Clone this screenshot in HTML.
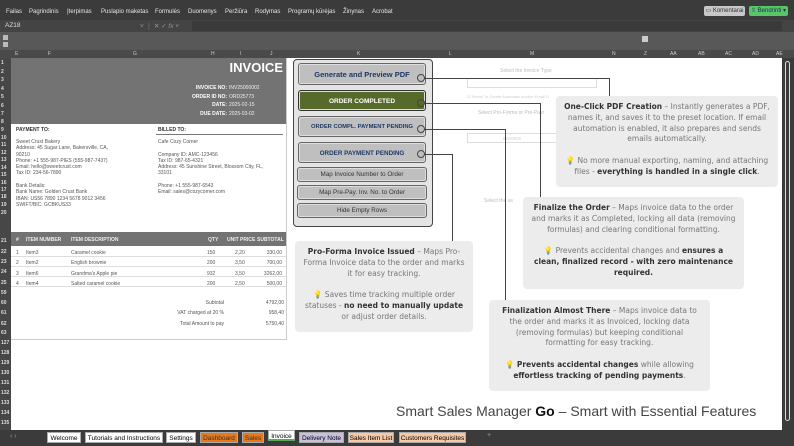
<!DOCTYPE html>
<html><head><meta charset="utf-8"><style>
*{margin:0;padding:0;box-sizing:border-box}
body{width:794px;height:446px;overflow:hidden;background:#fff;font-family:"Liberation Sans",sans-serif;position:relative}
.a{position:absolute}
.menu{left:0;top:0;width:794px;height:20px;background:#3b3b3b;color:#e6e6e6;font-size:6px}
.menu span{position:absolute;top:9px}
.fb{left:0;top:20px;width:794px;height:12px;background:#444;color:#ddd;font-size:6.5px}
.ol{left:0;top:32px;width:794px;height:18px;background:#585858}
.ch{left:0;top:50px;width:794px;height:8px;background:#4a4a4a;color:#ccc;font-size:5px}
.ch span{position:absolute;top:1px}
.rh{left:0;top:58px;width:11px;height:372px;background:#474747;color:#ddd;font-size:5px;font-weight:bold}
.rh span{position:absolute;left:1px}
.inv{left:11px;top:58px;width:275px;height:66px;background:#737373}
.t{font-size:5px;color:#555;line-height:6.3px}
.tab{top:432px;height:11px;font-size:6.5px;line-height:11px;text-align:center;border:1px solid #aaa}
.btn{left:298px;width:128px;border:1px solid #666;border-radius:3px;background:#bfbfbf;color:#1f3864;font-weight:bold;text-align:center;box-shadow:inset 0 0 0 1px #ddd}
.c{border-radius:4px;background:#ececec;color:#777;font-family:"DejaVu Sans",sans-serif;font-size:7.5px;line-height:10.8px;text-align:center;padding:6px 7px}
.c b{color:#333}
.ln{background:#444}
.cir{width:8px;height:8px;border:1.5px solid #444;border-radius:50%;background:#bfbfbf}
</style></head><body>
<div class="a menu">
<span style="left:6px">Failas</span><span style="left:29px">Pagrindinis</span><span style="left:67px">Įterpimas</span><span style="left:101px">Puslapio maketas</span><span style="left:155px">Formulės</span><span style="left:188px">Duomenys</span><span style="left:225px">Peržiūra</span><span style="left:255px">Rodymas</span><span style="left:288px">Programų kūrėjas</span><span style="left:343px">Žinynas</span><span style="left:372px">Acrobat</span>
<div class="a" style="left:704px;top:6px;width:41px;height:10px;background:#c8c8c8;color:#333;font-size:6px;line-height:10px;text-align:center;border-radius:2px">▭ Komentarai</div>
<div class="a" style="left:749px;top:6px;width:39px;height:10px;background:#5ac46a;color:#134;font-size:6px;line-height:10px;text-align:center;border-radius:2px">⇧ Bendrinti ▾</div>
</div>
<div class="a fb"><span class="a" style="left:5px;top:2px">AZ18</span><span class="a" style="left:140px;top:2px;color:#999">˅ ⋮ ✕ ✓ <i>fx</i> ˅</span><div class="a" style="left:192px;top:1px;width:590px;height:10px;background:#3a3a3a"></div></div>
<div class="a ol"><div class="a" style="left:3px;top:3px;width:5px;height:5px;background:#bbb"></div><div class="a" style="left:3px;top:10px;width:5px;height:5px;background:#bbb"></div><div class="a" style="left:642px;top:4px;width:6px;height:6px;background:#ccc"></div></div>
<div class="a ch"><span style="left:15px">E</span><span style="left:48px">F</span><span style="left:133px">G</span><span style="left:211px">H</span><span style="left:240px">I</span><span style="left:270px">J</span><span style="left:357px">K</span><span style="left:449px">L</span><span style="left:530px">M</span><span style="left:612px">N</span><span style="left:644px">Z</span><span style="left:670px">AA</span><span style="left:698px">AB</span><span style="left:725px">AC</span><span style="left:752px">AD</span><span style="left:776px">AE</span></div>
<div class="a rh">
<span style="top:2px">1</span><span style="top:11px">2</span><span style="top:19px">3</span><span style="top:28px">4</span><span style="top:36px">5</span><span style="top:45px">6</span><span style="top:53px">7</span><span style="top:61px">8</span><span style="top:69px">9</span><span style="top:77px">10</span><span style="top:84px">11</span><span style="top:92px">12</span><span style="top:99px">13</span><span style="top:107px">14</span><span style="top:114px">15</span><span style="top:122px">16</span><span style="top:129px">17</span><span style="top:136px">18</span><span style="top:144px">19</span><span style="top:152px">20</span><span style="top:180px">21</span><span style="top:191px">22</span><span style="top:201px">23</span><span style="top:211px">24</span><span style="top:222px">25</span><span style="top:232px">59</span><span style="top:242px">60</span><span style="top:252px">61</span><span style="top:263px">62</span><span style="top:272px">63</span><span style="top:282px">127</span><span style="top:292px">128</span><span style="top:302px">129</span><span style="top:312px">130</span><span style="top:322px">131</span><span style="top:332px">132</span><span style="top:342px">133</span><span style="top:352px">134</span><span style="top:362px">135</span>
</div>
<div class="a inv">
<div class="a" style="right:3px;top:2px;color:#fff;font-size:13px;font-weight:bold">INVOICE</div>
<div class="a" style="left:170px;top:26px;color:#fff;font-size:5px;line-height:8.5px;text-align:right;width:46px;font-weight:bold">INVOICE NO:<br>ORDER ID NO:<br>DATE:<br>DUE DATE:</div>
<div class="a" style="left:218px;top:26px;color:#eee;font-size:5px;line-height:8.5px">INV25000002<br>ORD25773<br>2025-02-15<br>2025-03-02</div>
</div>
<div class="a t" style="left:16px;top:127px;font-weight:bold;color:#333">PAYMENT TO:</div>
<div class="a t" style="left:158px;top:127px;font-weight:bold;color:#333">BILLED TO:</div>
<div class="a" style="left:156px;top:134px;width:127px;height:1px;background:#777"></div>
<div class="a t" style="left:16px;top:139px">Sweet Crust Bakery<br>Address: 45 Sugar Lane, Bakersville, CA,<br>90210<br>Phone: +1 555-987-PIES (555-987-7437)<br>Email: hello@sweetcrust.com<br>Tax ID: 234-56-7890<br><br>Bank Details:<br>Bank Name: Golden Crust Bank<br>IBAN: US56 7890 1234 5678 9012 3456<br>SWIFT/BIC: GCBKUS33</div>
<div class="a t" style="left:158px;top:139px">Cafe Cozy Corner<br><br>Company ID: AMC-123456<br>Tax ID: 987-65-4321<br>Address: 45 Sunshine Street, Blossom City, FL,<br>33101<br><br>Phone: +1 555-987-6543<br>Email: sales@cozycorner.com</div>
<div class="a" style="left:11px;top:232px;width:275px;height:14px;background:#737373;color:#eee;font-size:5px;font-weight:bold">
<span class="a" style="left:5px;top:5px">#</span><span class="a" style="left:15px;top:5px">ITEM NUMBER</span><span class="a" style="left:60px;top:5px">ITEM DESCRIPTION</span><span class="a" style="left:197px;top:5px">QTY</span><span class="a" style="left:216px;top:5px">UNIT PRICE</span><span class="a" style="left:246px;top:5px">SUBTOTAL</span></div>
<div class="a t" style="left:16px;top:248px;line-height:10.4px">1<br>2<br>3<br>4</div>
<div class="a t" style="left:26px;top:248px;line-height:10.4px">Item3<br>Item2<br>Item6<br>Item4</div>
<div class="a t" style="left:71px;top:248px;line-height:10.4px">Caramel cookie<br>English brownie<br>Grandma's Apple pie<br>Salted caramel cookie</div>
<div class="a t" style="left:207px;top:248px;line-height:10.4px">150<br>200<br>932<br>200</div>
<div class="a t" style="left:235px;top:248px;line-height:10.4px">2,20<br>3,50<br>3,50<br>2,50</div>
<div class="a t" style="left:257px;top:248px;line-height:10.4px;text-align:right;width:25px">330,00<br>700,00<br>3262,00<br>500,00</div>
<div class="a" style="left:11px;top:256px;width:275px;border-top:1px solid #ddd;height:31px;border-bottom:1px solid #ddd"></div>
<div class="a" style="left:11px;top:266px;width:275px;border-top:1px solid #ddd;height:11px;border-bottom:1px solid #ddd"></div>
<div class="a t" style="left:150px;top:298px;line-height:10.4px;text-align:right;width:74px">Subtotal<br>VAT charged at 20 %<br>Total Amount to pay</div>
<div class="a t" style="left:250px;top:298px;line-height:10.4px;text-align:right;width:34px">4792,00<br>958,40<br>5750,40</div>
<div class="a" style="left:11px;top:339px;width:275px;height:1px;background:#ccc"></div>
<div class="a" style="left:286px;top:58px;width:1px;height:282px;background:#ccc"></div>
<div class="a" style="left:500px;top:68px;font-size:5px;color:#bbb">Select the Invoice Type</div>
<div class="a" style="left:467px;top:78px;width:130px;height:10px;border:1px solid #ddd"></div>
<div class="a" style="left:467px;top:94px;font-size:4px;color:#ccc">☑ Select To Create Automatic Invoice Email D</div>
<div class="a" style="left:478px;top:110px;font-size:5px;color:#bbb">Select Pro-Forma or Pre-Payr</div>
<div class="a" style="left:467px;top:133px;width:90px;height:10px;border:1px solid #ddd;font-size:4.5px;color:#ccc;text-align:center;line-height:9px">INVOICE</div>
<div class="a" style="left:484px;top:198px;font-size:5px;color:#bbb">Select the us</div>
<div class="a" style="left:293px;top:59px;width:140px;height:168px;border:1.5px solid #444;border-radius:4px;background:#e4e4e4"></div>
<div class="a btn" style="top:63px;height:22px;line-height:22px;font-size:7.5px">Generate and Preview PDF</div>
<div class="a btn" style="top:90px;height:21px;line-height:21px;font-size:6.5px;background:#566b2a;color:#fff;border-color:#333">ORDER COMPLETED</div>
<div class="a btn" style="top:116px;height:21px;line-height:21px;font-size:5.8px">ORDER COMPL. PAYMENT PENDING</div>
<div class="a btn" style="top:142px;height:21px;line-height:21px;font-size:6.3px">ORDER PAYMENT PENDING</div>
<div class="a btn" style="left:297px;width:130px;top:167px;height:15px;line-height:14px;font-size:6.3px;color:#333;font-weight:normal">Map Invoice Number to Order</div>
<div class="a btn" style="left:297px;width:130px;top:185px;height:15px;line-height:14px;font-size:6.3px;color:#333;font-weight:normal">Map Pre-Pay. Inv. No. to Order</div>
<div class="a btn" style="left:297px;width:130px;top:203px;height:15px;line-height:14px;font-size:6.3px;color:#333;font-weight:normal">Hide Empty Rows</div>
<div class="a ln" style="left:424px;top:78px;width:186px;height:1px"></div><div class="a ln" style="left:609px;top:78px;width:1px;height:18px"></div>
<div class="a ln" style="left:424px;top:103px;width:117px;height:1px"></div><div class="a ln" style="left:540px;top:103px;width:1px;height:94px"></div>
<div class="a ln" style="left:424px;top:129px;width:82px;height:1px"></div><div class="a ln" style="left:505px;top:129px;width:1px;height:171px"></div>
<div class="a ln" style="left:424px;top:154px;width:29px;height:1px"></div><div class="a ln" style="left:452px;top:154px;width:1px;height:87px"></div>
<div class="a cir" style="left:417px;top:74px"></div><div class="a cir" style="left:417px;top:99px;background:#566b2a"></div><div class="a cir" style="left:417px;top:125px"></div><div class="a cir" style="left:417px;top:150px"></div>
<div class="a c" style="left:556px;top:96px;width:222px;height:91px">
<b>One-Click PDF Creation</b> – Instantly generates a PDF, names it, and saves it to the preset location. If email automation is enabled, it also prepares and sends emails automatically.<br><br><span style="color:#e8a800">💡</span> No more manual exporting, naming, and attaching files - <b>everything is handled in a single click</b>.</div>
<div class="a c" style="left:523px;top:197px;width:221px;height:92px">
<b>Finalize the Order</b> – Maps invoice data to the order and marks it as Completed, locking all data (removing formulas) and clearing conditional formatting.<br><br><span style="color:#e8a800">💡</span> Prevents accidental changes and <b>ensures a clean, finalized record - with zero maintenance required.</b></div>
<div class="a c" style="left:295px;top:241px;width:178px;height:91px">
<b>Pro-Forma Invoice Issued</b> – Maps Pro-Forma Invoice data to the order and marks it for easy tracking.<br><br><span style="color:#e8a800">💡</span> Saves time tracking multiple order statuses - <b>no need to manually update</b> or adjust order details.</div>
<div class="a c" style="left:489px;top:300px;width:221px;height:91px">
<b>Finalization Almost There</b> – Maps invoice data to the order and marks it as Invoiced, locking data (removing formulas) but keeping conditional formatting for easy tracking.<br><br><span style="color:#e8a800">💡</span> <b>Prevents accidental changes</b> while allowing <b>effortless tracking of pending payments</b>.</div>
<div class="a" style="left:396px;top:403px;font-size:14px;color:#444;white-space:nowrap">Smart Sales Manager <b style="color:#111">Go</b> – Smart with Essential Features</div>
<div class="a" style="left:782px;top:58px;width:12px;height:372px;background:#3b3b3b"><div class="a" style="left:3px;top:3px;width:5px;height:360px;border:1px solid #ddd;border-radius:3px"></div></div>
<div class="a" style="left:0;top:430px;width:794px;height:16px;background:#3b3b3b;color:#999;font-size:7px"><span class="a" style="left:10px;top:3px">‹ ›</span><span class="a" style="left:487px;top:2px">+</span></div>
<div class="a tab" style="left:47px;width:34px;background:#fff">Welcome</div>
<div class="a tab" style="left:85px;width:78px;background:#fff">Tutorials and Instructions</div>
<div class="a tab" style="left:166px;width:30px;background:#fff">Settings</div>
<div class="a tab" style="left:200px;width:38px;background:#e8791a;color:#333">Dashboard</div>
<div class="a tab" style="left:242px;width:22px;background:#e8791a;color:#333">Sales</div>
<div class="a tab" style="left:268px;width:27px;background:#fff;border-bottom:2px solid #5a5;top:430px">Invoice</div>
<div class="a tab" style="left:299px;width:45px;background:#c9c0de">Delivery Note</div>
<div class="a tab" style="left:348px;width:46px;background:#f5c9a6">Sales Item List</div>
<div class="a tab" style="left:399px;width:67px;background:#f5c9a6">Customers Requisites</div>
</body></html>
